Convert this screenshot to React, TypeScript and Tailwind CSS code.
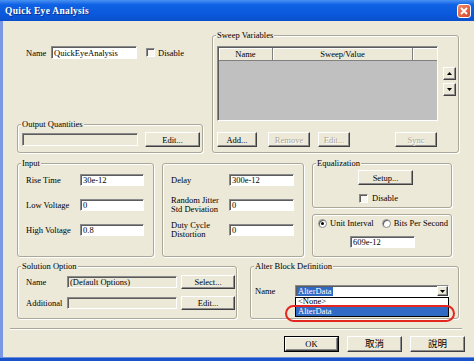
import React from "react";

const raised =
  "bg-[#ECE9D8] border border-t-white border-l-white border-r-[#404040] border-b-[#404040] shadow-[inset_-1px_-1px_0_#8E8E8E]";
const sunken =
  "border border-t-[#8A8A8A] border-l-[#8A8A8A] border-r-white border-b-white shadow-[inset_1px_1px_0_#5C5C5C]";
const group =
  "border border-[#ACA899] rounded-[3px] shadow-[inset_1px_1px_0_#fff,1px_1px_0_#fff]";
const legend = "ml-[3px] px-[1px] bg-[#ECE9D8] leading-[10px]";
const disabledText = "text-[#ACA899] [text-shadow:1px_1px_0_#fff]";

function Btn({
  className,
  children,
  disabled,
}: {
  className: string;
  children: React.ReactNode;
  disabled?: boolean;
}) {
  return (
    <div
      className={`${raised} flex items-center justify-center shrink-0 ${
        disabled ? disabledText : "text-black"
      } ${className}`}
    >
      {children}
    </div>
  );
}

function Field({
  className,
  children,
  readOnly,
}: {
  className: string;
  children?: React.ReactNode;
  readOnly?: boolean;
}) {
  return (
    <div
      className={`${sunken} ${
        readOnly ? "bg-[#ECE9D8]" : "bg-white"
      } flex items-center pl-[2px] shrink-0 whitespace-nowrap overflow-hidden ${className}`}
    >
      {children}
    </div>
  );
}

function Check({ className = "" }: { className?: string }) {
  return (
    <div
      className={`w-[9px] h-[9px] bg-[#F7F6F1] border border-t-[#8A8A8A] border-l-[#8A8A8A] border-r-white border-b-white shadow-[inset_1px_1px_0_#5C5C5C] shrink-0 ${className}`}
    />
  );
}

function Radio({ checked }: { checked?: boolean }) {
  return (
    <div className="w-[9px] h-[9px] rounded-full bg-white border border-[#8A8A8A] shadow-[inset_1px_1px_0_#5C5C5C] flex items-center justify-center shrink-0">
      {checked && <div className="w-[3px] h-[3px] rounded-full bg-black" />}
    </div>
  );
}

function Tri({ down }: { down?: boolean }) {
  return (
    <svg width="5" height="3" viewBox="0 0 5 3">
      {down ? (
        <polygon points="0,0 5,0 2.5,3" fill="#000" />
      ) : (
        <polygon points="0,3 5,3 2.5,0" fill="#000" />
      )}
    </svg>
  );
}

export default function App() {
  return (
    <div className="w-[474px] h-[361px] bg-[#ECE9D8] flex flex-col overflow-hidden [font-family:'Liberation_Serif','Noto_Sans_CJK_TC',serif] text-[8.5px] leading-[10px] text-black">
      {/* Title bar */}
      <div className="h-[21px] shrink-0 flex items-center justify-between pl-[5px] pr-[3px] bg-[linear-gradient(180deg,#4A93F3_0%,#0F62E4_22%,#0A58DB_70%,#0A50CC_100%)]">
        <span className="text-white font-bold text-[9.5px] tracking-[0.3px] [text-shadow:1px_1px_0_#0B2E8E]">
          Quick Eye Analysis
        </span>
        <div className="w-[14px] h-[14px] rounded-[3px] border border-white bg-[linear-gradient(135deg,#EF8A6C,#D9462A)] flex items-center justify-center">
          <svg width="8" height="8" viewBox="0 0 8 8">
            <path d="M1 1 L7 7 M7 1 L1 7" stroke="#fff" strokeWidth="1.8" />
          </svg>
        </div>
      </div>

      <div className="flex-1 flex min-h-0">
        <div className="w-[3px] bg-[#7A97E4] shrink-0" />
        <div className="flex-1 flex flex-col pl-[14px]">
          {/* Row 1 */}
          <div className="mt-[9px] flex h-[123px] shrink-0">
            <div className="w-[186px] flex flex-col">
              <div className="mt-[16px] flex items-center h-[13px] pl-[9px]">
                <span className="w-[25px]">Name</span>
                <Field className="w-[86px] h-[13px]">QuickEyeAnalysis</Field>
                <Check className="ml-[9px]" />
                <span className="ml-[3px]">Disable</span>
              </div>
              <fieldset className={`mt-auto h-[34px] ${group}`}>
                <legend className={legend}>Output Quantities</legend>
                <div className="flex items-center pl-[4px] pt-[3px]">
                  <Field readOnly className="w-[116px] h-[13px]" />
                  <Btn className="ml-[7px] w-[55px] h-[15px]">Edit...</Btn>
                </div>
              </fieldset>
            </div>

            <fieldset className={`ml-[9px] w-[247px] h-[123px] ${group}`}>
              <legend className={legend}>Sweep Variables</legend>
              <div className="flex pl-[4px] pt-[6px]">
                <div className="w-[221px] h-[75px] flex flex-col border border-t-[#8A8A8A] border-l-[#8A8A8A] border-r-white border-b-white">
                  <div className="h-[14px] flex shrink-0 border-l border-t border-[#5C5C5C]">
                    <div className="w-[54px] flex items-center justify-center border-r border-b border-r-[#808080] border-b-[#808080] shadow-[inset_1px_1px_0_#fff]">
                      Name
                    </div>
                    <div className="w-[140px] flex items-center justify-center border-r border-b border-r-[#808080] border-b-[#808080] shadow-[inset_1px_1px_0_#fff]">
                      Sweep/Value
                    </div>
                    <div className="flex-1 border-b border-b-[#808080] shadow-[inset_1px_1px_0_#fff]" />
                  </div>
                  <div className="flex-1 bg-[#C0C0C0] border-l border-[#5C5C5C]" />
                </div>
                <div className="ml-[5px] w-[13px] flex flex-col pt-[21px] gap-[3px]">
                  <Btn className="w-[13px] h-[13px]">
                    <Tri />
                  </Btn>
                  <Btn className="w-[13px] h-[13px]">
                    <Tri down />
                  </Btn>
                </div>
              </div>
              <div className="flex pl-[4px] mt-[11px]">
                <Btn className="w-[40px] h-[15px]">Add...</Btn>
                <Btn disabled className="ml-[11px] w-[42px] h-[15px]">
                  Remove
                </Btn>
                <Btn disabled className="ml-[8px] w-[32px] h-[15px]">
                  Edit...
                </Btn>
                <Btn disabled className="ml-[45px] w-[42px] h-[15px]">
                  Sync
                </Btn>
              </div>
            </fieldset>
          </div>

          {/* Row 2 */}
          <div className="mt-[5px] flex h-[99px] shrink-0">
            <fieldset className={`w-[137px] h-[99px] ${group}`}>
              <legend className={legend}>Input</legend>
              <div className="flex flex-col gap-[13px] pt-[6px] pl-[8px]">
                <div className="flex items-center h-[12px]">
                  <span className="w-[54px]">Rise Time</span>
                  <Field className="w-[64px] h-[12px]">30e-12</Field>
                </div>
                <div className="flex items-center h-[12px]">
                  <span className="w-[54px]">Low Voltage</span>
                  <Field className="w-[64px] h-[12px]">0</Field>
                </div>
                <div className="flex items-center h-[12px]">
                  <span className="w-[54px]">High Voltage</span>
                  <Field className="w-[64px] h-[12px]">0.8</Field>
                </div>
              </div>
            </fieldset>

            <div
              className={`ml-[8px] mt-[5px] w-[142px] h-[94px] ${group} flex flex-col gap-[13px] pt-[10px] pl-[8px]`}
            >
              <div className="flex items-center h-[12px]">
                <span className="w-[58px]">Delay</span>
                <Field className="w-[65px] h-[12px]">300e-12</Field>
              </div>
              <div className="flex items-center h-[12px]">
                <span className="w-[58px] leading-[9px]">
                  Random Jitter
                  <br />
                  Std Deviation
                </span>
                <Field className="w-[65px] h-[12px]">0</Field>
              </div>
              <div className="flex items-center h-[12px]">
                <span className="w-[58px] leading-[9px]">
                  Duty Cycle
                  <br />
                  Distortion
                </span>
                <Field className="w-[65px] h-[12px]">0</Field>
              </div>
            </div>

            <div className="ml-[8px] w-[140px] flex flex-col">
              <fieldset className={`h-[50px] ${group}`}>
                <legend className={legend}>Equalization</legend>
                <div className="pt-[2px] pl-[45px]">
                  <Btn className="w-[55px] h-[15px]">Setup...</Btn>
                  <div className="mt-[8px] flex items-center ml-[1px]">
                    <Check />
                    <span className="ml-[4px]">Disable</span>
                  </div>
                </div>
              </fieldset>
              <div className={`mt-[6px] h-[43px] ${group} flex flex-col`}>
                <div className="flex items-center pt-[3px] pl-[5px] h-[13px]">
                  <Radio checked />
                  <span className="ml-[3px]">Unit Interval</span>
                  <div className="ml-[8px]">
                    <Radio />
                  </div>
                  <span className="ml-[3px]">Bits Per Second</span>
                </div>
                <Field className="ml-[37px] mt-[8px] w-[65px] h-[12px]">609e-12</Field>
              </div>
            </div>
          </div>

          {/* Row 3 */}
          <div className="mt-[4px] flex h-[58px] shrink-0">
            <fieldset className={`w-[220px] h-[58px] ${group}`}>
              <legend className={legend}>Solution Option</legend>
              <div className="pt-[4px] pl-[8px] flex flex-col gap-[7px]">
                <div className="flex items-center h-[14px]">
                  <span className="w-[41px]">Name</span>
                  <Field readOnly className="w-[110px] h-[12px]">
                    (Default Options)
                  </Field>
                  <Btn className="ml-[4px] w-[54px] h-[14px]">Select...</Btn>
                </div>
                <div className="flex items-center h-[14px]">
                  <span className="w-[41px]">Additional</span>
                  <Field readOnly className="w-[110px] h-[12px]" />
                  <Btn className="ml-[4px] w-[54px] h-[14px]">Edit...</Btn>
                </div>
              </div>
            </fieldset>

            <fieldset className={`ml-[13px] w-[209px] h-[58px] ${group}`}>
              <legend className={legend}>Alter Block Definition</legend>
              <div className="pt-[14px] pl-[4px] flex items-center h-[26px]">
                <span className="w-[40px]">Name</span>
                <div className="relative w-[154px] h-[12px]">
                  <div
                    className={`${sunken} bg-white w-full h-full flex items-center pl-[1px]`}
                  >
                    <span className="bg-[#316AC5] text-white px-[1px] leading-[9px]">
                      AlterData
                    </span>
                  </div>
                  <div
                    className={`absolute right-[1px] top-[1px] w-[11px] h-[10px] ${raised} flex items-center justify-center`}
                  >
                    <Tri down />
                  </div>
                  <div className="absolute left-0 top-[12px] w-[154px] h-[20px] border border-black bg-white flex flex-col overflow-hidden">
                    <div className="h-[9px] leading-[8px] pl-[2px] -mt-[1px]">
                      &lt;None&gt;
                    </div>
                    <div className="h-[10px] bg-[#316AC5] text-white pl-[2px] leading-[10px]">
                      AlterData
                    </div>
                  </div>
                  <div className="absolute -left-[10px] top-[20px] w-[170px] h-[17px] rounded-full border-2 border-[#E3261F]" />
                </div>
              </div>
            </fieldset>
          </div>

          {/* Separator */}
          <div className="mt-[9px] -ml-[7px] w-[452px] h-[2px] border-t border-t-[#ACA899] border-b border-b-white shrink-0" />

          {/* Bottom buttons */}
          <div className="mt-[6px] flex justify-end pr-[9px] gap-[8px] shrink-0">
            <div className="w-[55px] h-[16px] border border-black flex">
              <Btn className="flex-1 h-full">OK</Btn>
            </div>
            <Btn className="w-[55px] h-[16px] text-[9.5px]">取消</Btn>
            <Btn className="w-[55px] h-[16px] text-[9.5px]">說明</Btn>
          </div>
        </div>
      </div>
      <div className="h-[4px] shrink-0 bg-[#1A52CC] border-t border-t-[#6E8EE0]" />
    </div>
  );
}
